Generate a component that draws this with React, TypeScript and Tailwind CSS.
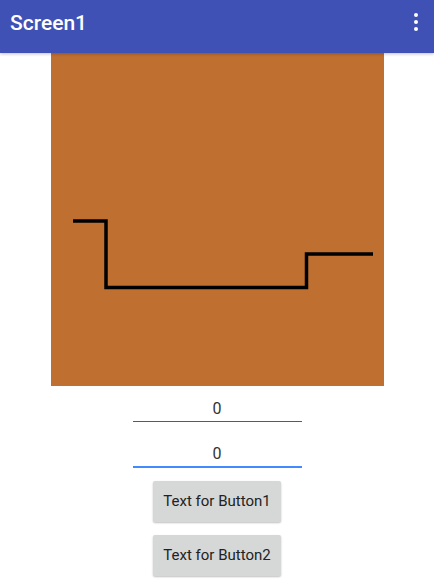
export default function App() {
  return (
    <div className="flex min-h-screen flex-col bg-white font-['Roboto',sans-serif]">
      <header className="relative z-10 flex h-[53px] shrink-0 items-start justify-between bg-[#3f51b5] pl-[10px] pr-[16px] shadow-[0_1px_3px_rgba(0,0,0,0.25)]">
        <h1 className="pt-[11px] text-[21px] leading-[24px] font-medium text-white">Screen1</h1>
        <div className="flex flex-col items-center gap-[3px] pt-[13px]">
          <span className="h-[4px] w-[4px] rounded-full bg-white" />
          <span className="h-[4px] w-[4px] rounded-full bg-white" />
          <span className="h-[4px] w-[4px] rounded-full bg-white" />
        </div>
      </header>

      <div className="flex flex-col items-center">
        <div className="h-[333px] w-[333px] bg-[#bf6f30]">
          <svg width="333" height="333" viewBox="0 0 333 333">
            <polyline
              points="22,168 55,168 55,234.5 255.5,234.5 255.5,201 322,201"
              fill="none"
              stroke="#000"
              strokeWidth="3.5"
              strokeLinejoin="miter"
            />
          </svg>
        </div>

        <div className="mt-[13px] w-[169px] border-b border-[#5a5a5a] pb-[2px] text-center text-[16px] leading-[20px] text-[#333]">
          0
        </div>
        <div className="mt-[22px] w-[169px] border-b-2 border-[#448aff] pb-[2px] text-center text-[16px] leading-[20px] text-[#333]">
          0
        </div>

        <button className="mt-[13px] h-[41px] w-[128px] rounded-[2px] bg-[#d6d7d7] text-[15px] text-[#222] shadow-[0_1px_2px_rgba(0,0,0,0.25)]">
          Text for Button1
        </button>
        <button className="mt-[13px] h-[41px] w-[128px] rounded-[2px] bg-[#d6d7d7] text-[15px] text-[#222] shadow-[0_1px_2px_rgba(0,0,0,0.25)]">
          Text for Button2
        </button>
      </div>
    </div>
  );
}
